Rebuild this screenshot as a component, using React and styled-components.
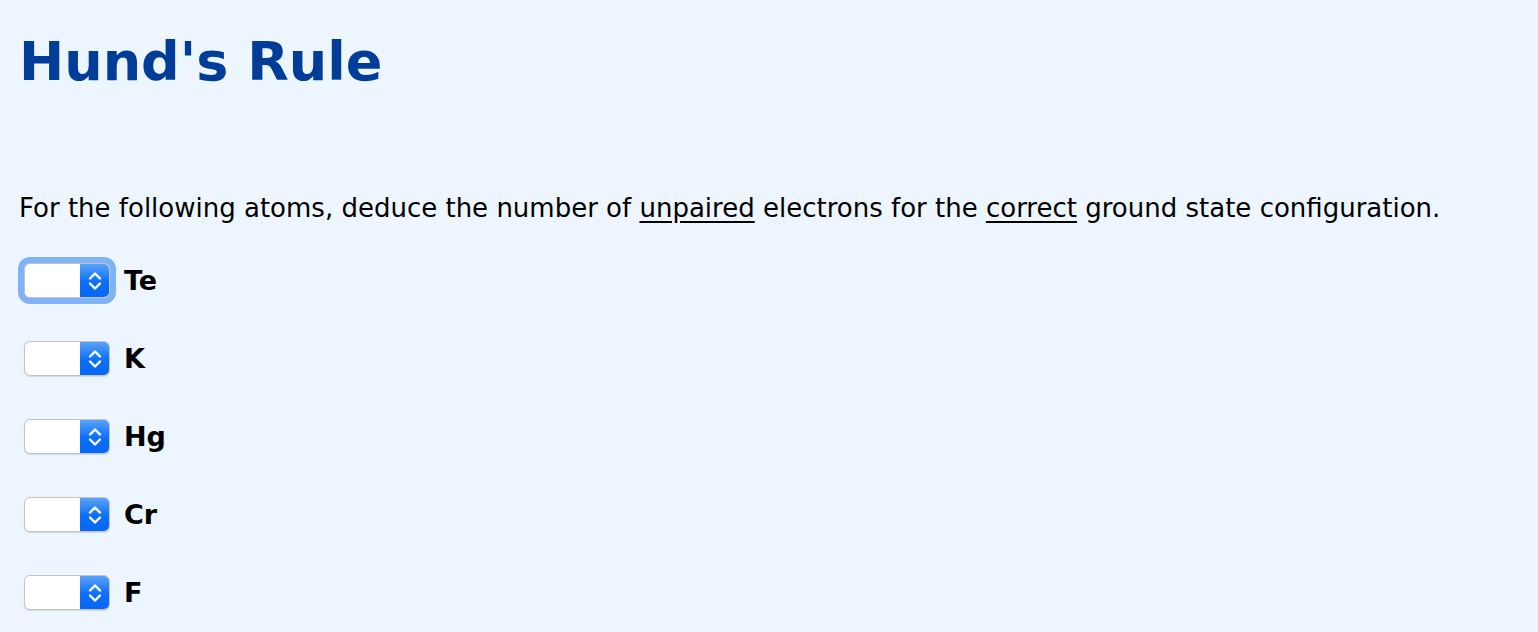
import React from 'react';
import styled, { createGlobalStyle } from 'styled-components';

const Global = createGlobalStyle`
  html, body {
    margin: 0;
    padding: 0;
    background: #edf5fe;
  }
  body {
    font-family: "DejaVu Sans", Verdana, sans-serif;
    color: #000;
  }
`;

const Page = styled.div`
  padding: 22px 20px 0 19px;
  min-height: 632px;
  box-sizing: border-box;
`;

const Title = styled.h1`
  margin: 0;
  font-size: 54px;
  line-height: 80px;
  font-weight: bold;
  color: #003d99;
`;

const Intro = styled.p`
  margin: 90px 0 0 0;
  font-size: 26px;
  line-height: 32px;
  u {
    text-underline-offset: 4px;
  }
`;

const List = styled.div`
  display: flex;
  flex-direction: column;
  gap: 43px;
  margin-top: 39px;
`;

const Row = styled.label`
  display: flex;
  align-items: center;
  gap: 14px;
  padding-left: 5px;
`;

const SelectBox = styled.div`
  width: 86px;
  height: 35px;
  box-sizing: border-box;
  border-radius: 6px;
  background: #fff;
  border: 1px solid #c3c3c3;
  box-shadow: ${(p) =>
    p.$focused
      ? '0 0 0 6px #7fb3f6'
      : '0 1px 1px rgba(0, 0, 0, 0.12)'};
  display: flex;
  justify-content: flex-end;
`;

const Stepper = styled.div`
  width: 29px;
  height: 100%;
  border-radius: 0 5px 5px 0;
  background: linear-gradient(#5aa1fb, #0a6ff9 55%, #0866f5);
  display: flex;
  align-items: center;
  justify-content: center;
`;

const Symbol = styled.span`
  font-size: 27px;
  font-weight: bold;
`;

const Chevrons = () => (
  <svg width="16" height="24" viewBox="0 0 16 24" fill="none" stroke="#fff" strokeWidth="2.4" strokeLinecap="round" strokeLinejoin="round">
    <path d="M3 9.5 L8 4.5 L13 9.5" />
    <path d="M3 14.5 L8 19.5 L13 14.5" />
  </svg>
);

const atoms = ['Te', 'K', 'Hg', 'Cr', 'F'];

export default function App() {
  return (
    <>
      <Global />
      <Page>
        <Title>Hund's Rule</Title>
        <Intro>
          For the following atoms, deduce the number of <u>unpaired</u> electrons for the <u>correct</u> ground state configuration.
        </Intro>
        <List>
          {atoms.map((a, i) => (
            <Row key={a}>
              <SelectBox $focused={i === 0}>
                <Stepper>
                  <Chevrons />
                </Stepper>
              </SelectBox>
              <Symbol>{a}</Symbol>
            </Row>
          ))}
        </List>
      </Page>
    </>
  );
}
